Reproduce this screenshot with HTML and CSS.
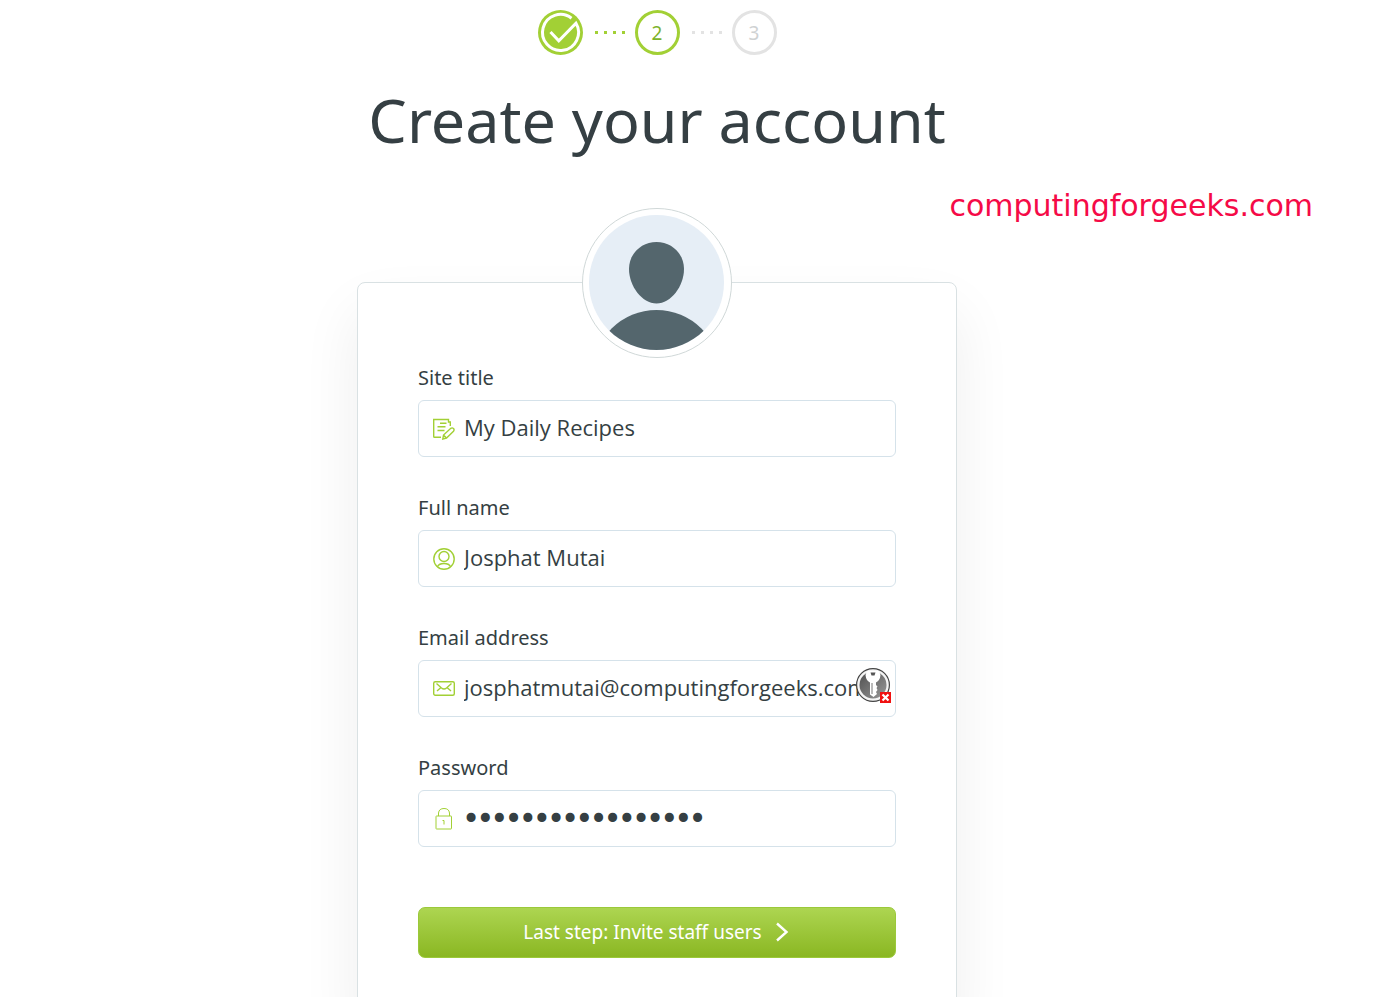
FILE: index.html
```html
<!DOCTYPE html>
<html lang="en">
<head>
    <meta charset="UTF-8">
    <meta name="viewport" content="width=device-width, initial-scale=1.0">
    <title>Create your account</title>
    <link rel="stylesheet" href="styles.css">
</head>
<body>
    <div class="watermark">computingforgeeks.com</div>

    <div class="page">
        <!-- Progress -->
        <div class="steps">
            <svg class="step-done" viewBox="0 0 45 45" role="img" aria-label="Step 1 completed">
                <circle cx="22.5" cy="22.5" r="22.5" fill="#a2d035"/>
                <path d="M33.500 8.200A18 18 0 1 0 38 13.300L20.800 30.800L12.500 22" fill="none" stroke="#fff" stroke-width="3"/>
            </svg>
            <span class="dots dots-active"></span>
            <span class="step step-active">2</span>
            <span class="dots"></span>
            <span class="step">3</span>
        </div>

        <h1>Create your account</h1>

        <form class="card">
            <svg class="avatar" viewBox="0 0 150 150" role="img" aria-label="Avatar">
                <defs>
                    <clipPath id="face"><circle cx="74.5" cy="74.5" r="67.5"/></clipPath>
                </defs>
                <circle cx="75" cy="75" r="74.5" fill="#fff" stroke="#d0d8d8"/>
                <circle cx="74.5" cy="74.5" r="67.5" fill="#e6eef6"/>
                <g clip-path="url(#face)" fill="#54666d">
                    <path d="M74.5 34C90 34 102 46 102 61C102 78 89 95.500 74.500 95.500C60 95.500 47 78 47 61C47 46 59 34 74.500 34Z"/>
                    <circle cx="74.500" cy="165.500" r="63.500"/>
                </g>
            </svg>

            <div class="form-group">
                <label for="siteTitle">Site title</label>
                <div class="field">
                    <svg class="icon" viewBox="0 0 22 22">
                        <path d="M17.300 8V4H15.500V1.500H.7V18.500Q.7 19.300 1.500 19.300H8M7 5.200H13.500M4.500 8.800H12.500M4.500 12.500H11.500"/>
                        <path d="M9.800 21L10.500 17L17.800 10.300Q19.300 9.300 20.700 10.700Q21.500 12 20.500 13.300L13.500 20ZM10.500 17L13.500 20"/>
                    </svg>
                    <input type="text" id="siteTitle" name="siteTitle" value="My Daily Recipes">
                </div>
            </div>
            <div class="form-group">
                <label for="fullName">Full name</label>
                <div class="field">
                    <svg class="icon" viewBox="0 0 22 22">
                        <circle cx="11" cy="11" r="10.200"/>
                        <circle cx="11" cy="8.500" r="5"/>
                        <path d="M4.500 18.500Q6 15.500 11 15.500T17.500 18.500"/>
                    </svg>
                    <input type="text" id="fullName" name="fullName" value="Josphat Mutai">
                </div>
            </div>
            <div class="form-group">
                <label for="email">Email address</label>
                <div class="field">
                    <svg class="icon" viewBox="0 0 22 22">
                        <rect x=".7" y="3.700" width="20.600" height="13.600" rx="1.500"/>
                        <path d="M3.500 5.500L8.500 10Q11 12 13.500 10L18.500 5.500M4 13L8 9.500M18 13L14 9.500"/>
                    </svg>
                    <input type="email" id="email" name="email" value="josphatmutai@computingforgeeks.com">
                    <svg class="key" viewBox="0 0 36 36">
                        <defs>
                            <linearGradient id="keyBg" x1="0" y1="0" x2="1" y2="1">
                                <stop offset="0" stop-color="#4f4f4f"/>
                                <stop offset="1" stop-color="#999"/>
                            </linearGradient>
                        </defs>
                        <circle cx="17" cy="17" r="16.400" fill="#f4f4f4" stroke="#444" stroke-width="1.200"/>
                        <circle cx="17" cy="17" r="13.500" fill="url(#keyBg)"/>
                        <path d="M11 3H23L24.500 7Q24 12.500 20 14.500V17L21.500 18.500L20.500 20L21.500 22L20 24L21 26L17.500 29L14 26.500V14.500Q10 12.500 9.500 7Z" fill="#fff"/>
                        <path d="M14.500 4.500H19.500L18.500 7.500H15.500Z" fill="#555"/>
                        <path d="M16 15V26" stroke="#777"/>
                        <rect x="24" y="24" width="11" height="11" fill="#f01010"/>
                        <path d="M26.500 26.500L32.500 32.500M32.500 26.500L26.500 32.500" stroke="#fff" stroke-width="2.200"/>
                    </svg>
                </div>
            </div>
            <div class="form-group">
                <label for="password">Password</label>
                <div class="field">
                    <svg class="icon icon-lock" viewBox="0 0 22 22">
                        <path d="M5.500 8V5Q6 .500 11 .500T16.500 5V8"/>
                        <rect x="3" y="8" width="15.500" height="13" rx=".5"/>
                        <path d="M9.500 12.500H11V16.500"/>
                    </svg>
                    <input type="password" id="password" name="password" value="recipes-site-2019">
                </div>
            </div>

            <button type="submit">
                Last step: Invite staff users
                <svg class="arrow" viewBox="0 0 14 20"><path d="M2 1.500L11.500 10L2 18.500"/></svg>
            </button>
        </form>
    </div>
</body>
</html>
```
FILE: styles.css
```css
body {
    font-family: "Noto Sans", "Open Sans", sans-serif;
    background-color: #fff;
    color: #353f43;
    margin: 0;
    padding: 10px 61px 0 0;
}

.watermark {
    position: absolute;
    top: 186px;
    right: 62px;
    font-family: "DejaVu Sans", sans-serif;
    font-size: 30px;
    line-height: 40px;
    color: #f50a47;
}

.page {
    max-width: 600px;
    margin: 0 auto;
}

/* Progress */
.steps {
    display: flex;
    justify-content: center;
    align-items: center;
    gap: 10px;
}

.step-done {
    width: 45px;
    height: 45px;
}

.step {
    width: 45px;
    height: 45px;
    box-sizing: border-box;
    border: 3px solid #e3e3e3;
    border-radius: 50%;
    font-size: 19px;
    line-height: 40px;
    text-align: center;
    color: #cfd2d3;
}

.step-active {
    border-color: #a2d035;
    color: #7db32b;
}

.dots {
    width: 30px;
    height: 3px;
    margin-left: 2px;
    background: repeating-linear-gradient(to right, #e3e3e3 0 3px, transparent 3px 9px);
}

.dots-active {
    background: repeating-linear-gradient(to right, #a2d035 0 3px, transparent 3px 9px);
}

h1 {
    margin: 20px 0 117px;
    font-size: 61px;
    font-weight: 400;
    line-height: 90px;
    text-align: center;
}

.card {
    box-sizing: border-box;
    padding: 0 60px 60px;
    border: 1px solid #d9e1e3;
    border-radius: 8px;
    background-color: #fff;
    box-shadow: 0 30px 60px rgba(0, 0, 0, 0.07);
}

.avatar {
    display: block;
    width: 150px;
    height: 150px;
    margin: -75px auto 5px;
}

.form-group {
    margin-bottom: 36px;
}

label {
    display: block;
    margin-bottom: 7px;
    font-size: 20px;
    line-height: 30px;
}

.field {
    position: relative;
    display: flex;
    align-items: center;
    gap: 9px;
    height: 57px;
    box-sizing: border-box;
    padding-left: 14px;
    border: 1px solid #d5e2ea;
    border-radius: 6px;
}

.icon {
    flex: none;
    width: 22px;
    height: 22px;
    fill: none;
    stroke: #a2d035;
    stroke-width: 1.4;
}

.icon-lock {
    stroke-width: 1;
}

input {
    flex: 1;
    min-width: 0;
    padding: 0 0 3px;
    border: none;
    outline: none;
    background: none;
    font-family: "Open Sans", "Noto Sans", sans-serif;
    font-size: 22px;
    line-height: 30px;
    color: inherit;
}

/* Larger password bullets */
input[type="password"] {
    padding: 0;
    font-family: "DejaVu Sans", sans-serif;
    font-size: 24px;
    -webkit-text-stroke: 2px #353f43;
}

/* Password manager badge */
.key {
    position: absolute;
    top: 7px;
    right: 3px;
    width: 36px;
    height: 36px;
}

button {
    display: flex;
    justify-content: center;
    align-items: center;
    gap: 13px;
    width: 100%;
    height: 51px;
    margin-top: 60px;
    padding: 0 2px 2px 0;
    border: 1px solid #9bc93a;
    border-radius: 7px;
    background: linear-gradient(#add551, #8ab722);
    font-family: inherit;
    font-size: 19px;
    color: #fff;
    cursor: pointer;
}

.arrow {
    width: 14px;
    height: 20px;
    fill: none;
    stroke: #fff;
    stroke-width: 2.4;
}
```
